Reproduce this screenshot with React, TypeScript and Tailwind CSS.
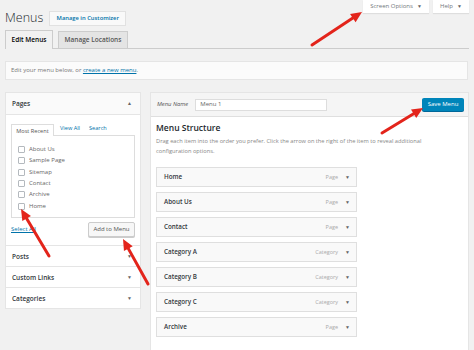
import type { ReactNode } from "react";

const pages = ["About Us", "Sample Page", "Sitemap", "Contact", "Archive", "Home"];

const menuItems = [
  { title: "Home", type: "Page" },
  { title: "About Us", type: "Page" },
  { title: "Contact", type: "Page" },
  { title: "Category A", type: "Category" },
  { title: "Category B", type: "Category" },
  { title: "Category C", type: "Category" },
  { title: "Archive", type: "Page" },
];

function Caret({ up = false }: { up?: boolean }) {
  return <span className="text-[5px] leading-none text-[#666]">{up ? "▲" : "▼"}</span>;
}

function AccordionRow({ children, up }: { children: ReactNode; up?: boolean }) {
  return (
    <div className="flex h-[21px] items-center justify-between border-t border-[#e5e5e5] pl-[6px] pr-[8px]">
      <span className="text-[6.5px] font-semibold text-[#32373c]">{children}</span>
      <Caret up={up} />
    </div>
  );
}

function Arrows() {
  const arrows = [
    { x1: 312, y1: 45, x2: 362, y2: 12 },
    { x1: 382, y1: 133, x2: 423, y2: 108 },
    { x1: 49, y1: 256, x2: 21, y2: 209 },
    { x1: 148, y1: 284, x2: 123, y2: 239 },
  ];
  return (
    <svg className="pointer-events-none absolute inset-0" width={474} height={350}>
      {arrows.map((a) => {
        const dx = a.x2 - a.x1;
        const dy = a.y2 - a.y1;
        const len = Math.hypot(dx, dy);
        const ux = dx / len;
        const uy = dy / len;
        const head = 11;
        const bx = a.x2 - ux * head;
        const by = a.y2 - uy * head;
        const px = -uy * 5;
        const py = ux * 5;
        return (
          <g key={`${a.x1}-${a.y1}`}>
            <line x1={a.x1} y1={a.y1} x2={bx} y2={by} stroke="#e3241b" strokeWidth={3} strokeLinecap="round" />
            <polygon points={`${a.x2},${a.y2} ${bx + px},${by + py} ${bx - px},${by - py}`} fill="#e3241b" />
          </g>
        );
      })}
    </svg>
  );
}

export default function App() {
  return (
    <div className="relative h-[350px] w-[474px] overflow-hidden bg-[#f1f1f1] font-['Open_Sans',sans-serif] text-[#444]">
      {/* header */}
      <div className="flex items-start justify-between px-[5px]">
        <div className="flex items-center gap-[6px] pt-[9px]">
          <h1 className="text-[12.5px] font-light leading-[18px] text-[#23282d]">Menus</h1>
          <span className="flex h-[15px] w-[77px] items-center justify-center border border-[#e1e1e1] bg-[#f9f9f9] text-[5.8px] font-semibold text-[#0073aa]">
            Manage in Customizer
          </span>
        </div>
        <div className="flex gap-[4px]">
          <span className="flex h-[13px] w-[66px] items-center justify-center gap-[4px] bg-white text-[6px] text-[#72777c] shadow-[0_1px_1px_rgba(0,0,0,0.08)]">
            Screen Options <Caret />
          </span>
          <span className="flex h-[13px] w-[36px] items-center justify-center gap-[4px] bg-white text-[6px] text-[#72777c] shadow-[0_1px_1px_rgba(0,0,0,0.08)]">
            Help <Caret />
          </span>
        </div>
      </div>

      {/* tabs */}
      <div className="mx-[5px] mt-[3px] flex w-[464px] items-end gap-[5px] border-b border-[#ccc]">
        <span className="-mb-px flex h-[19px] w-[48px] items-center justify-center border border-b-0 border-[#ccc] bg-[#f1f1f1] text-[6.5px] font-semibold text-[#000]">
          Edit Menus
        </span>
        <span className="flex h-[17px] w-[70px] items-center justify-center border border-b-0 border-[#ccc] bg-[#e4e4e4] text-[6.5px] font-semibold text-[#555]">
          Manage Locations
        </span>
      </div>

      {/* notice */}
      <div className="mx-[5px] mt-[12px] flex h-[19px] w-[463px] items-center border border-[#e5e5e5] bg-[#fbfbfb] px-[5px] text-[6px] text-[#777]">
        Edit your menu below, or&nbsp;<span className="text-[#0073aa] underline">create a new menu</span>.
      </div>

      <div className="mt-[12px] flex items-start px-[5px]">
        {/* left column */}
        <div className="w-[136px] border border-[#e5e5e5] bg-white">
          <div className="flex h-[21px] items-center justify-between bg-[#fafafa] pl-[6px] pr-[8px]">
            <span className="text-[6.5px] font-semibold text-[#32373c]">Pages</span>
            <Caret up />
          </div>
          <div className="border-t border-[#e5e5e5] px-[5px] pb-[8px] pt-[9px]">
            <div className="flex items-end gap-[6px] text-[5.6px]">
              <span className="-mb-px flex h-[12px] w-[43px] items-center justify-center border border-b-0 border-[#ddd] bg-white text-[#555]">
                Most Recent
              </span>
              <span className="pb-[3px] text-[#0073aa]">View All</span>
              <span className="pb-[3px] pl-[3px] text-[#0073aa]">Search</span>
            </div>
            <div className="flex h-[83px] w-[124px] flex-col gap-[3.4px] border border-[#ddd] bg-white pl-[6px] pt-[9px]">
              {pages.map((p) => (
                <label key={p} className="flex h-[8px] items-center gap-[4px] text-[6px] text-[#666]">
                  <span className="h-[7px] w-[7px] rounded-[1px] border border-[#b4b9be] bg-white" />
                  {p}
                </label>
              ))}
            </div>
            <div className="mt-[4px] flex items-center justify-between">
              <span className="text-[6px] text-[#0073aa] underline">Select All</span>
              <span className="flex h-[15px] w-[47px] items-center justify-center rounded-[2px] border border-[#ccc] bg-[#f7f7f7] text-[6px] text-[#555] shadow-[0_1px_0_#ccc]">
                Add to Menu
              </span>
            </div>
          </div>
          <AccordionRow>Posts</AccordionRow>
          <AccordionRow>Custom Links</AccordionRow>
          <AccordionRow>Categories</AccordionRow>
        </div>

        {/* right column */}
        <div className="ml-[9px] h-[260px] w-[319px] border border-[#e5e5e5] bg-white">
          <div className="flex h-[24px] items-center border-b border-[#dfdfdf] bg-[#f5f5f5] pl-[6px] pr-[4px]">
            <span className="text-[5.8px] italic text-[#555]">Menu Name</span>
            <span className="ml-[7px] flex h-[12px] w-[132px] items-center border border-[#ddd] bg-white px-[4px] text-[6px] text-[#666]">
              Menu 1
            </span>
            <span className="ml-auto flex h-[13px] w-[42px] items-center justify-center rounded-[2px] bg-[#0085ba] text-[6px] text-white shadow-[0_1px_0_#006799]">
              Save Menu
            </span>
          </div>
          <div className="px-[5px] pt-[5px]">
            <h2 className="text-[8.5px] font-semibold leading-[12px] text-[#23282d]">Menu Structure</h2>
            <p className="mt-[2px] w-[290px] text-[5.7px] leading-[10px] text-[#888]">
              Drag each item into the order you prefer. Click the arrow on the right of the item to reveal additional
              configuration options.
            </p>
            <div className="mt-[11px] flex w-[201px] flex-col gap-[5px]">
              {menuItems.map((item) => (
                <div
                  key={item.title}
                  className="flex h-[20px] items-center border border-[#dfdfdf] bg-[#f9f9f9] pl-[7px] pr-[6px]"
                >
                  <span className="text-[6.3px] font-semibold text-[#32373c]">{item.title}</span>
                  <span className="ml-auto mr-[7px] text-[5.5px] text-[#aaa]">{item.type}</span>
                  <Caret />
                </div>
              ))}
            </div>
          </div>
        </div>
      </div>

      <Arrows />
    </div>
  );
}
